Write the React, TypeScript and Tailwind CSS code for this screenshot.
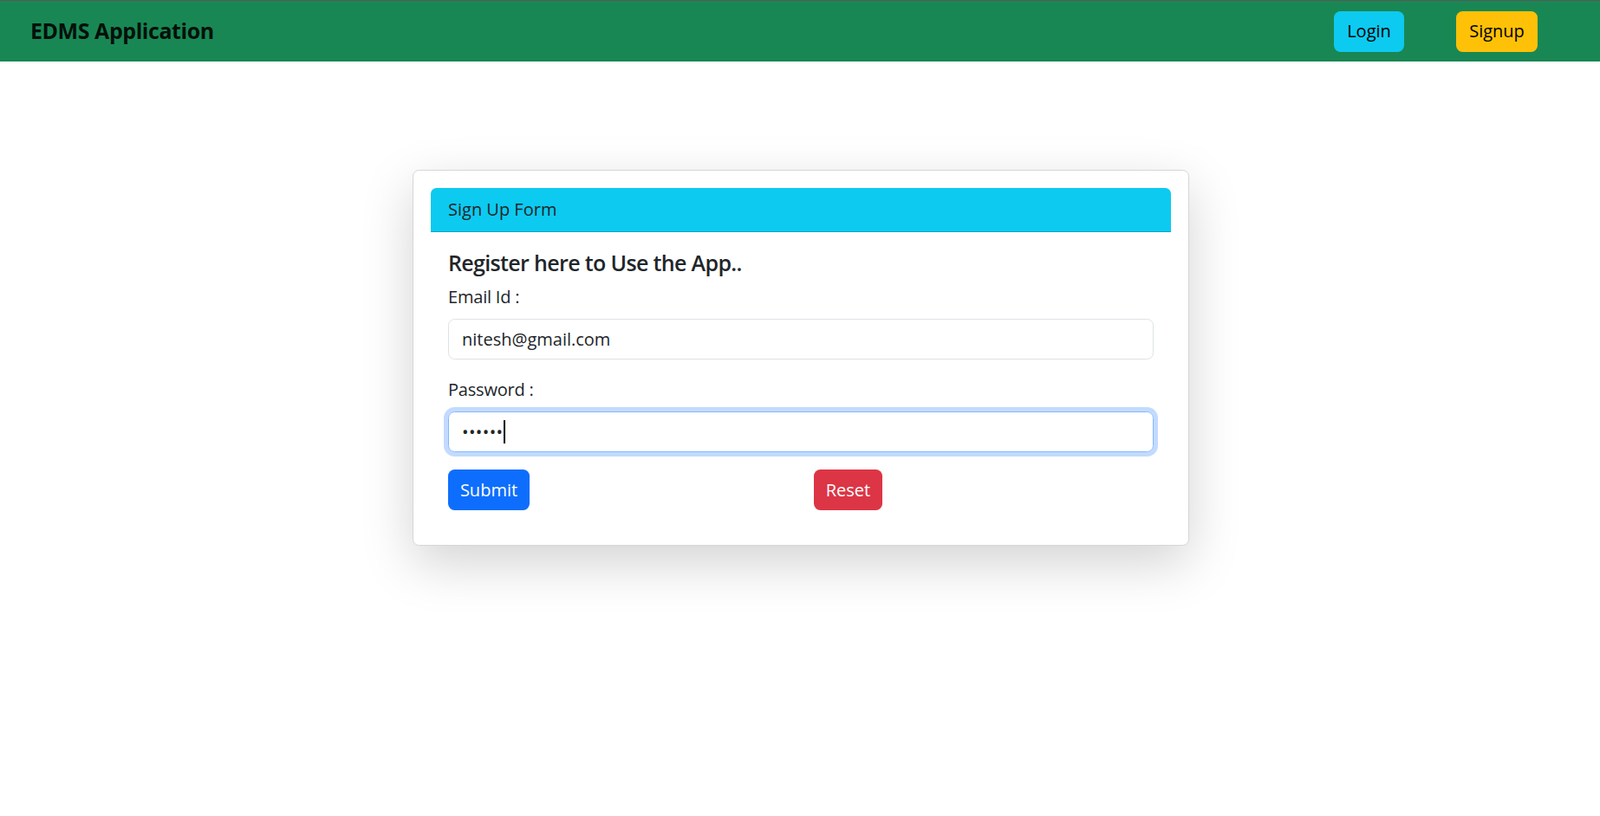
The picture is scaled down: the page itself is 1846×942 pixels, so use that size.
export default function App() {
  return (
    <div className="min-h-screen bg-white font-['Open_Sans',sans-serif] text-[#212529]">
      {/* Navbar */}
      <nav className="flex h-[71px] items-center border-t border-[#5a5a5a] bg-[#198754] pl-[35px] pr-[72px]">
        <span className="text-[25px] font-bold tracking-[-0.45px] text-black/90">EDMS Application</span>
        <div className="ml-auto flex items-center gap-[60px]">
          <button className="h-[47px] w-[81px] rounded-[7.5px] bg-[#0dcaf0] text-[20px] leading-[30px] text-black">
            Login
          </button>
          <button className="h-[47px] w-[94px] rounded-[7.5px] bg-[#ffc107] text-[20px] leading-[30px] text-black">
            Signup
          </button>
        </div>
      </nav>

      {/* Sign up card */}
      <div className="mx-auto mt-[125px] w-[896px] translate-x-[1px] rounded-[7.5px] border border-[#d6d6d6] bg-white p-5 shadow-[0_20px_60px_rgba(0,0,0,0.175)]">
        <div className="rounded-t-[6.5px] border-b border-black/[.175] bg-[#0dcaf0] px-5 py-[10px] text-[20px] leading-[30px]">
          Sign Up Form
        </div>

        <form className="p-5" onSubmit={(e) => e.preventDefault()}>
          <h5 className="mb-[10px] text-[25px] font-semibold leading-[30px] tracking-[-0.65px]">
            Register here to Use the App..
          </h5>

          <label className="mb-[10px] block text-[20px] leading-[30px] tracking-[-0.2px]">Email Id :</label>
          <input
            type="email"
            defaultValue="nitesh@gmail.com"
            className="mb-5 block h-[47px] w-full rounded-[7.5px] border border-[#dee2e6] px-[15px] text-[20px] leading-[30px] text-[#212529] outline-none"
          />

          <label className="mb-[10px] block text-[20px] leading-[30px] tracking-[-0.2px]">Password :</label>
          {/* focused password field */}
          <div className="flex h-[47px] w-full items-center rounded-[7.5px] border border-[#86b7fe] px-[15px] text-[20px] leading-[30px] text-[#212529] shadow-[0_0_0_5px_rgba(13,110,253,0.25)]">
            <span className="tracking-[0.4px]">••••••</span>
            <span className="inline-block h-[27px] w-[2px] bg-black" />
          </div>

          <div className="mt-5 grid grid-cols-2 gap-[30px]">
            <div>
              <button
                type="submit"
                className="h-[47px] w-[94px] rounded-[7.5px] bg-[#0d6efd] text-[20px] leading-[30px] text-white"
              >
                Submit
              </button>
            </div>
            <div>
              <button
                type="reset"
                className="h-[47px] w-[79px] rounded-[7.5px] bg-[#dc3545] text-[20px] leading-[30px] text-white"
              >
                Reset
              </button>
            </div>
          </div>
        </form>
      </div>
    </div>
  );
}
